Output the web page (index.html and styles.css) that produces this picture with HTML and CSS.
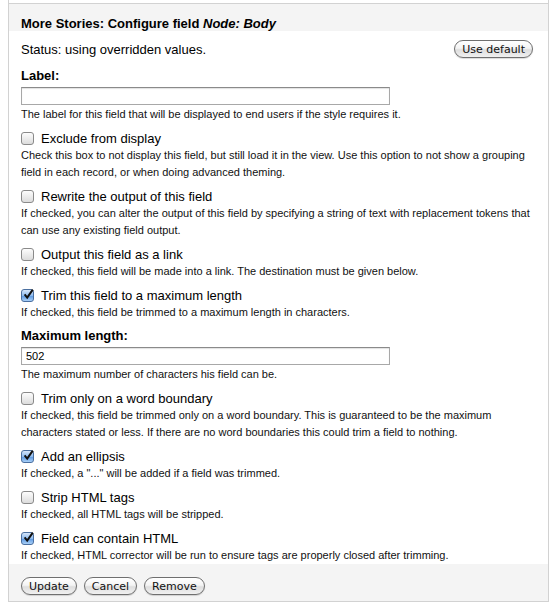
FILE: index.html
```html
<!DOCTYPE html>
<html>
<head>
<meta charset="utf-8">
<link rel="stylesheet" href="styles.css">
</head>
<body>
<div class="panel">
  <div class="panel-top"></div>
  <div class="header">More Stories: Configure field <em>Node: Body</em></div>
  <div class="content">
    <div class="status-row">
      <span class="status">Status: using overridden values.</span>
      <button class="btn">Use default</button>
    </div>

    <div class="item item-first">
      <div class="field-label">Label:</div>
      <div class="input"></div>
      <div class="desc desc-after-input">The label for this field that will be displayed to end users if the style requires it.</div>
    </div>

    <div class="item">
      <div class="check-row"><span class="cb"></span>Exclude from display</div>
      <div class="desc">Check this box to not display this field, but still load it in the view. Use this option to not show a grouping field in each record, or when doing advanced theming.</div>
    </div>

    <div class="item">
      <div class="check-row"><span class="cb"></span>Rewrite the output of this field</div>
      <div class="desc">If checked, you can alter the output of this field by specifying a string of text with replacement tokens that can use any existing field output.</div>
    </div>

    <div class="item">
      <div class="check-row"><span class="cb"></span>Output this field as a link</div>
      <div class="desc">If checked, this field will be made into a link. The destination must be given below.</div>
    </div>

    <div class="item">
      <div class="check-row"><span class="cb cb-on"><svg viewBox="0 0 13 13" width="13" height="13"><path d="M2.6 6.4 L5.2 9.6 L10.8 1.6" fill="none" stroke="#111" stroke-width="2"/></svg></span>Trim this field to a maximum length</div>
      <div class="desc">If checked, this field be trimmed to a maximum length in characters.</div>
    </div>

    <div class="item item-tight">
      <div class="field-label">Maximum length:</div>
      <div class="input">502</div>
      <div class="desc desc-after-input">The maximum number of characters his field can be.</div>
    </div>

    <div class="item">
      <div class="check-row"><span class="cb"></span>Trim only on a word boundary</div>
      <div class="desc">If checked, this field be trimmed only on a word boundary. This is guaranteed to be the maximum characters stated or less. If there are no word boundaries this could trim a field to nothing.</div>
    </div>

    <div class="item">
      <div class="check-row"><span class="cb cb-on"><svg viewBox="0 0 13 13" width="13" height="13"><path d="M2.6 6.4 L5.2 9.6 L10.8 1.6" fill="none" stroke="#111" stroke-width="2"/></svg></span>Add an ellipsis</div>
      <div class="desc">If checked, a "..." will be added if a field was trimmed.</div>
    </div>

    <div class="item">
      <div class="check-row"><span class="cb"></span>Strip HTML tags</div>
      <div class="desc">If checked, all HTML tags will be stripped.</div>
    </div>

    <div class="item">
      <div class="check-row"><span class="cb cb-on"><svg viewBox="0 0 13 13" width="13" height="13"><path d="M2.6 6.4 L5.2 9.6 L10.8 1.6" fill="none" stroke="#111" stroke-width="2"/></svg></span>Field can contain HTML</div>
      <div class="desc">If checked, HTML corrector will be run to ensure tags are properly closed after trimming.</div>
    </div>
  </div>
  <div class="footer">
    <button class="btn">Update</button>
    <button class="btn">Cancel</button>
    <button class="btn">Remove</button>
  </div>
</div>
</body>
</html>
```

FILE: styles.css
```css
html, body {
  margin: 0;
  padding: 0;
  background: #fff;
}
body {
  font-family: "Liberation Sans", Arial, Helvetica, sans-serif;
  color: #000;
}
.panel {
  margin-left: 8px;
  width: 539px;
  border-left: 1px solid #d2d2d2;
  border-right: 1px solid #d2d2d2;
  border-bottom: 1px solid #d2d2d2;
}
.panel-top {
  height: 3px;
}
.header {
  border-top: 1px solid #d2d2d2;
  background: #f4f4f4;
  height: 28px;
  box-sizing: border-box;
  padding: 12px 0 0 12px;
  font-size: 13px;
  line-height: 16px;
  font-weight: bold;
}
.header em {
  font-style: italic;
}
.content {
  padding: 9px 7px 0 12px;
}
.status-row {
  display: flex;
  justify-content: space-between;
  align-items: center;
  height: 18px;
  padding-right: 8px;
}
.status {
  font-size: 13px;
  line-height: 17px;
}
.btn {
  font-family: "DejaVu Sans", sans-serif;
  font-size: 11px;
  line-height: 15px;
  height: 18px;
  padding: 0 7px;
  margin: 0;
  border: 1px solid #6f6f6f;
  border-radius: 9px;
  background: linear-gradient(#ffffff 0%, #f4f4f4 45%, #dedede 55%, #f0f0f0 100%);
  color: #111;
  box-shadow: 0 1px 1px rgba(0,0,0,0.15);
}
.item {
  margin-top: 7px;
}
.item-first {
  margin-top: 9px;
}
.item-tight {
  margin-top: 6px;
}
.field-label {
  font-size: 13px;
  font-weight: bold;
  line-height: 17px;
}
.input {
  margin-top: 3px;
  width: 369px;
  height: 18px;
  box-sizing: border-box;
  border: 1px solid #a8a8a8;
  border-top-color: #8a8a8a;
  box-shadow: inset 0 1px 1px rgba(0,0,0,0.12);
  font-size: 11px;
  line-height: 16px;
  padding-left: 4px;
  color: #000;
}
.check-row {
  display: flex;
  align-items: center;
  font-size: 13px;
  line-height: 17px;
}
.cb {
  display: inline-block;
  flex: none;
  width: 13px;
  height: 13px;
  box-sizing: border-box;
  border: 1px solid #8a8a8a;
  border-radius: 3px;
  background: linear-gradient(#fdfdfd, #dcdcdc);
  margin-right: 7px;
  position: relative;
}
.cb-on {
  border-color: #4a6fa0;
  background: linear-gradient(#d6e6fa 0%, #8fbcef 50%, #5f9ae2 55%, #a9d0f7 100%);
}
.cb svg {
  position: absolute;
  left: 0;
  top: -2px;
}
.desc {
  font-size: 11px;
  line-height: 17px;
  color: #111;
}
.desc-after-input {
  margin-top: 1px;
}
.footer {
  background: #f4f4f4;
  height: 37px;
  box-sizing: border-box;
  padding: 13px 0 0 12px;
  display: flex;
  gap: 7px;
  align-items: flex-start;
}
```
